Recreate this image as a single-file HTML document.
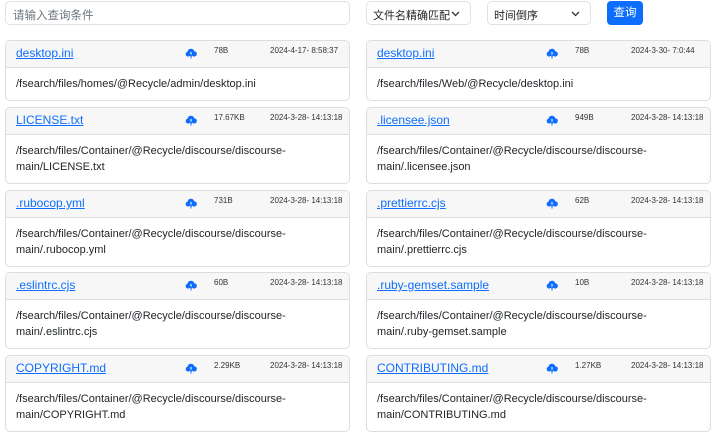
<!DOCTYPE html>
<html><head><meta charset="utf-8"><style>
body{margin:0;width:720px;height:439px;background:#fff;font-family:"Liberation Sans","Noto Sans CJK SC",sans-serif;position:relative;overflow:hidden}
.box{position:absolute;border:1px solid #dee2e6;border-radius:5px;box-sizing:border-box;background:#fff;font-size:11.5px;color:#212529}
.inp{left:5px;top:1px;width:345px;height:24px;color:#6c757d;padding:5px 7px}
.sel{top:1px;height:24px;padding:5px 6px;white-space:nowrap;font-size:11px}
.sel svg{position:absolute;right:10px;top:9px}
.btn{position:absolute;left:607px;top:1px;width:36px;height:24px;background:#0d6efd;border-radius:4px;color:#fff;font-size:11.5px;text-align:center;line-height:24px}
.card{position:absolute;width:345px;border:1px solid #dadde1;border-radius:5px;box-sizing:border-box;overflow:hidden}
.hd{height:26px;background:#f7f7f7;border-bottom:1px solid #dadde1;position:relative}
.hd a{position:absolute;left:10px;top:5px;font-size:12px;color:#0d6efd;text-decoration:underline}
.hd svg{position:absolute;left:179px;top:6px}
.hd .s{position:absolute;left:208px;top:5px;font-size:8px;color:#333}
.hd .d{position:absolute;left:264px;top:5px;font-size:8px;color:#333}
.bd{padding:0 10px;font-size:11px;line-height:16px;color:#212529;position:absolute;top:27px;bottom:0;left:0;right:0;display:flex;align-items:center}
</style></head><body>
<div class="box inp">请输入查询条件</div>
<div class="box sel" style="left:366px;width:105px">文件名精确匹配<svg width="9" height="6"><path d="M1 1l3.5 3.5L8 1" stroke="#333" stroke-width="1.3" fill="none"/></svg></div>
<div class="box sel" style="left:487px;width:104px">时间倒序<svg width="9" height="6"><path d="M1 1l3.5 3.5L8 1" stroke="#333" stroke-width="1.3" fill="none"/></svg></div>
<div class="btn">查询</div>

<script>
const data=[
[40,61,"desktop.ini","78B","2024-4-17- 8:58:37","/fsearch/files/homes/@Recycle/admin/desktop.ini","desktop.ini","78B","2024-3-30- 7:0:44","/fsearch/files/Web/@Recycle/desktop.ini"],
[107,77,"LICENSE.txt","17.67KB","2024-3-28- 14:13:18","/fsearch/files/Container/@Recycle/discourse/discourse-<br>main/LICENSE.txt",".licensee.json","949B","2024-3-28- 14:13:18","/fsearch/files/Container/@Recycle/discourse/discourse-<br>main/.licensee.json"],
[190,77,".rubocop.yml","731B","2024-3-28- 14:13:18","/fsearch/files/Container/@Recycle/discourse/discourse-<br>main/.rubocop.yml",".prettierrc.cjs","62B","2024-3-28- 14:13:18","/fsearch/files/Container/@Recycle/discourse/discourse-<br>main/.prettierrc.cjs"],
[272,77,".eslintrc.cjs","60B","2024-3-28- 14:13:18","/fsearch/files/Container/@Recycle/discourse/discourse-<br>main/.eslintrc.cjs",".ruby-gemset.sample","10B","2024-3-28- 14:13:18","/fsearch/files/Container/@Recycle/discourse/discourse-<br>main/.ruby-gemset.sample"],
[355,77,"COPYRIGHT.md","2.29KB","2024-3-28- 14:13:18","/fsearch/files/Container/@Recycle/discourse/discourse-<br>main/COPYRIGHT.md","CONTRIBUTING.md","1.27KB","2024-3-28- 14:13:18","/fsearch/files/Container/@Recycle/discourse/discourse-<br>main/CONTRIBUTING.md"]];
const ic='<svg width="12" height="12" viewBox="0 0 12 12"><path d="M3 9.5H2.8A2.5 2.5 0 0 1 2.6 4.6 3.4 3.4 0 0 1 9.2 4.2 2.6 2.6 0 0 1 9.2 9.5Z" fill="#0d6efd"/><path d="M6 5v6M4.2 9.2 6 11l1.8-1.8" stroke="#fff" stroke-width="1.1" fill="none"/><path d="M6 7.5v4" stroke="#0d6efd" stroke-width="1"/></svg>';
let h='';
for(const r of data){
 for(const [x,o] of [[5,2],[366,6]]){
  h+=`<div class="card" style="left:${x}px;top:${r[0]}px;height:${r[1]}px"><div class="hd"><a>${r[o]}</a>${ic}<span class="s">${r[o+1]}</span><span class="d">${r[o+2]}</span></div><div class="bd"><div>${r[o+3]}</div></div></div>`;
 }
}
document.write(h);
</script>
</body></html>
